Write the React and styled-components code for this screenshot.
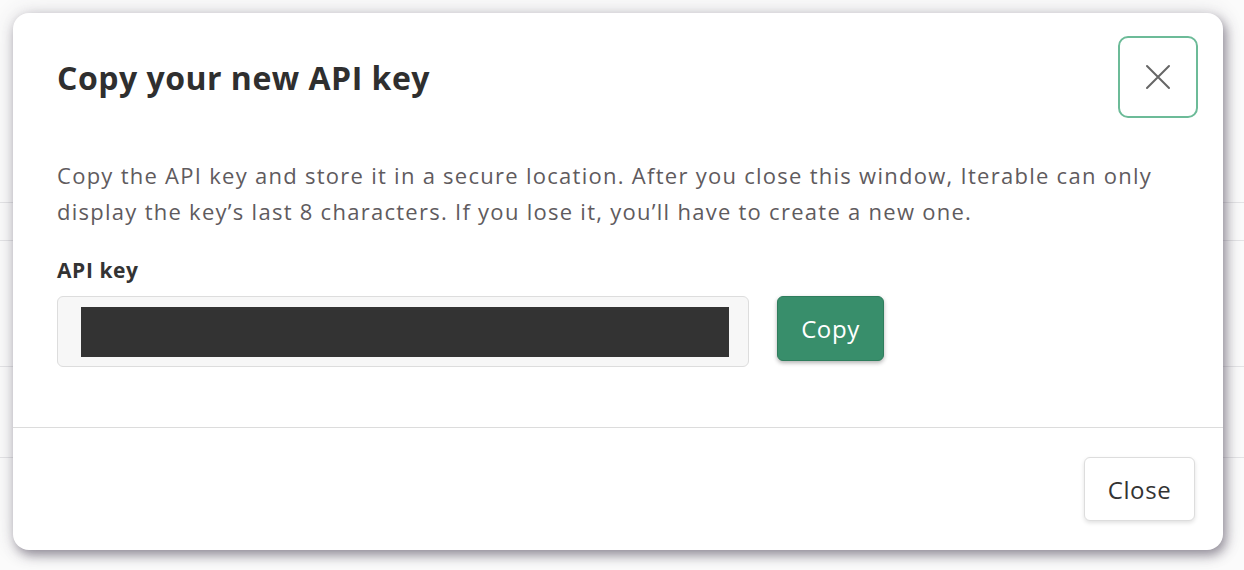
import React from 'react';
import styled, { createGlobalStyle } from 'styled-components';

const GlobalStyle = createGlobalStyle`
  html, body {
    margin: 0;
    padding: 0;
    background: #ffffff;
  }
  body {
    font-family: "Open Sans", Lato, "Liberation Sans", sans-serif;
    width: 1244px;
    height: 570px;
    overflow: hidden;
  }
`;

// page behind the modal
const Page = styled.div`
  position: relative;
  width: 1244px;
  height: 570px;
  background: #fbfbfb;
`;

const BackRow = styled.div`
  height: ${(p) => p.h}px;
  border-bottom: 1px solid #e4e4e6;
`;

const Modal = styled.div`
  position: absolute;
  left: 13px;
  top: 13px;
  width: 1210px;
  height: 537px;
  background: #ffffff;
  border-radius: 16px;
  box-shadow: 3px 5px 12px rgba(70, 60, 80, 0.55), 0 0 22px rgba(70, 60, 80, 0.16);
  display: flex;
  flex-direction: column;
  overflow: hidden;
`;

const Header = styled.div`
  display: flex;
  align-items: center;
  justify-content: space-between;
  padding: 23px 25px 0 44px;
`;

const Title = styled.h2`
  margin: 0;
  font-size: 32px;
  font-weight: 700;
  color: #2f2f2f;
  letter-spacing: 0.5px;
`;

const IconButton = styled.button`
  width: 80px;
  height: 82px;
  border: 2px solid #6cbb98;
  border-radius: 10px;
  background: #ffffff;
  display: flex;
  align-items: center;
  justify-content: center;
  padding: 0;
  cursor: pointer;
`;

const Body = styled.div`
  padding: 39px 44px 0 44px;
  flex: 1;
`;

const Text = styled.p`
  margin: 0;
  font-size: 22px;
  line-height: 36px;
  letter-spacing: 1.27px;
  color: #5f5b5e;
  white-space: nowrap;
`;

const Label = styled.div`
  margin-top: 27px;
  font-size: 21px;
  font-weight: 700;
  letter-spacing: 0.6px;
  color: #333333;
`;

const KeyRow = styled.div`
  display: flex;
  align-items: flex-start;
  gap: 28px;
  margin-top: 12px;
`;

const KeyField = styled.div`
  width: 692px;
  height: 71px;
  box-sizing: border-box;
  padding: 10px 19px 10px 23px;
  background: #f7f7f7;
  border: 1px solid #dddddd;
  border-radius: 6px;
`;

const Masked = styled.div`
  height: 50px;
  background: #333333;
`;

const Button = styled.button`
  font-family: inherit;
  font-size: 24px;
  letter-spacing: 0.6px;
  height: ${(p) => p.h}px;
  width: ${(p) => p.w}px;
  padding: 0;
  border-radius: 6px;
  cursor: pointer;
  background: ${(p) => (p.primary ? '#388e6b' : '#ffffff')};
  color: ${(p) => (p.primary ? '#ffffff' : '#333333')};
  border: 1px solid ${(p) => (p.primary ? '#2f7d5d' : '#dddddd')};
  box-shadow: 0 2px 4px rgba(0, 0, 0, ${(p) => (p.primary ? 0.3 : 0.12)});
`;

const Footer = styled.div`
  border-top: 1px solid #dcdcdc;
  display: flex;
  justify-content: flex-end;
  padding: 29px 28px 29px 0;
`;

const App = () => {
  return (
    <>
      <GlobalStyle />
      <Page>
        <BackRow h={202} />
        <BackRow h={37} />
        <BackRow h={125} />
        <BackRow h={90} />
        <Modal>
          <Header>
            <Title>Copy your new API key</Title>
            <IconButton aria-label="Close">
              <svg width="26" height="26" viewBox="0 0 26 26">
                <path d="M2 2 L24 24 M24 2 L2 24" stroke="#666666" strokeWidth="2" strokeLinecap="round" />
              </svg>
            </IconButton>
          </Header>
          <Body>
            <Text>
              Copy the API key and store it in a secure location. After you close this window, Iterable can only
              <br />
              display the key’s last 8 characters. If you lose it, you’ll have to create a new one.
            </Text>
            <Label>API key</Label>
            <KeyRow>
              <KeyField>
                <Masked />
              </KeyField>
              <Button primary h={65} w={107}>Copy</Button>
            </KeyRow>
          </Body>
          <Footer>
            <Button h={64} w={111}>Close</Button>
          </Footer>
        </Modal>
      </Page>
    </>
  );
};

export default App;
